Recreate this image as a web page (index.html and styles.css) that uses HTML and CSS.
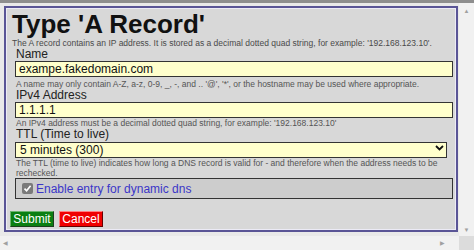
FILE: index.html
```html
<!DOCTYPE html>
<html lang="en">
<head>
  <meta charset="UTF-8">
  <title>Type 'A Record'</title>
  <link rel="stylesheet" href="styles.css">
</head>
<body>
  <div class="topstrip"></div>
  <div class="frame">
    <div class="view">
      <form class="dialog" onsubmit="return false">
        <h1>Type 'A Record'</h1>
        <p class="desc">The A record contains an IP address. It is stored as a decimal dotted quad string, for example: '192.168.123.10'.</p>

        <label class="lbl" for="name">Name</label>
        <input class="field" type="text" id="name" value="exampe.fakedomain.com">
        <p class="hint gap2">A name may only contain A-Z, a-z, 0-9, _, -, and .. '@', '*', or the hostname may be used where appropriate.</p>

        <label class="lbl" for="ip">IPv4 Address</label>
        <input class="field" type="text" id="ip" value="1.1.1.1">
        <p class="hint">An IPv4 address must be a decimal dotted quad string, for example: '192.168.123.10'</p>

        <label class="lbl" for="ttl">TTL (Time to live)</label>
        <div class="selwrap">
          <select class="field sel" id="ttl">
            <option>5 minutes (300)</option>
          </select>
          <svg class="chev" width="9" height="6" viewBox="0 0 9 6"><path d="M1 1 L4.5 4.5 L8 1" fill="none" stroke="#111" stroke-width="1.8"/></svg>
        </div>
        <p class="hint">The TTL (time to live) indicates how long a DNS record is valid for - and therefore when the address needs to be rechecked.</p>

        <div class="checkbox">
          <span class="box"><svg width="9" height="9" viewBox="0 0 9 9"><path d="M1.5 4.6 L3.6 6.8 L7.6 1.8" fill="none" stroke="#fff" stroke-width="1.6"/></svg></span>
          <span class="cblabel">Enable entry for dynamic dns</span>
        </div>

        <div class="buttons">
          <button class="btn submit">Submit</button>
          <button class="btn cancel">Cancel</button>
        </div>
      </form>
    </div>
    <div class="vscroll">
      <span class="arr">&#9650;</span>
      <span class="arr">&#9660;</span>
    </div>
    <div class="hscroll">
      <span class="arr">&#9664;</span>
      <span class="arr">&#9654;</span>
    </div>
    <div class="corner"></div>
  </div>
</body>
</html>
```

FILE: styles.css
```css
html, body { margin: 0; height: 100%; }
body { font-family: "Liberation Sans", Arial, sans-serif; background: #e9e9e9; overflow: hidden; }
.topstrip { height: 3px; background: #8e8e8e; }
.frame { display: grid; grid-template-columns: 459px 15px; grid-template-rows: 233px 14px; height: 247px; }
.view { padding: 3px 0 0 4px; overflow: hidden; min-width: 0; }
.dialog { display: flex; flex-direction: column; align-items: flex-start; width: 440px; height: 222px; padding: 0 4px 0 6px; border: 2px solid #5a5596; box-shadow: inset 0 0 0 1px #ecebf6; background: #d8d8d8; }
h1 { font-size: 26px; font-weight: bold; color: #111; margin: 2px 0 0 0; line-height: 28px; }
.desc { font-size: 8.5px; color: #4a4a4a; margin: 0; line-height: 10px; white-space: nowrap; }
.lbl { font-size: 12px; color: #222; margin: 1px 0 0 4px; line-height: 11px; }
.field { font-family: "Liberation Sans", Arial, sans-serif; font-size: 12px; color: #111; background: #ffffcc; border: 1px solid #333; margin: 1px 0 0 3px; padding: 0 3px; height: 16px; box-sizing: border-box; width: 438px; }
.hint { font-size: 8.5px; color: #555; margin: 0 0 0 4px; line-height: 10px; }
.gap2 { margin-top: 2px; }
.selwrap { position: relative; margin-left: 3px; }
.sel { appearance: none; -webkit-appearance: none; margin: 0; width: 432px; padding: 0 4px; border-radius: 0; }
.chev { position: absolute; left: 420px; top: 5px; }
.checkbox { display: flex; align-items: center; gap: 3px; margin: 0 0 0 3px; width: 438px; height: 21px; box-sizing: border-box; background: #cdcdcd; border: 1px solid #333; padding-left: 6px; }
.box { width: 11px; height: 11px; background: #7a7a7a; border-radius: 2px; display: flex; align-items: center; justify-content: center; }
.cblabel { font-size: 12px; color: #3b36c8; }
.buttons { display: flex; gap: 5px; margin: 12px 0 0 -2px; }
.btn { font-family: "Liberation Sans", Arial, sans-serif; font-size: 12px; color: #fff; height: 16px; width: 44px; padding: 0; line-height: 12px; border: 1px solid; }
.submit { background: #0b7f12; border-color: #6cb46f #1d3e1f #1d3e1f #6cb46f; }
.cancel { background: #f00000; border-color: #ff8080 #600 #600 #ff8080; }
.vscroll { background: #f1f1f1; display: flex; flex-direction: column; justify-content: space-between; align-items: center; padding: 5px 0 3px; }
.hscroll { background: #f1f1f1; display: flex; justify-content: space-between; align-items: center; padding: 0 14px 0 3px; }
.arr { font-size: 6px; color: #a0a0a0; line-height: 6px; }
.corner { background: #dcdcdc; }
```
